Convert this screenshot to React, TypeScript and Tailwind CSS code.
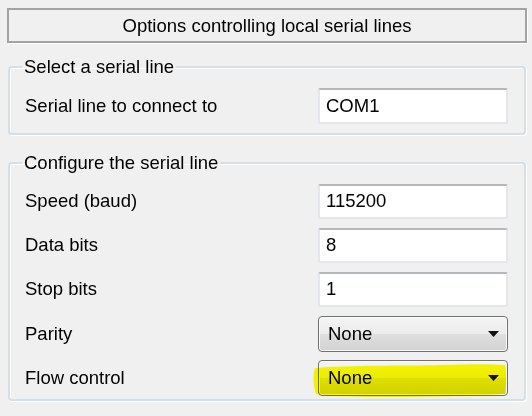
import React from 'react';

const font = { fontFamily: '"Liberation Sans", Arial, sans-serif' };

function TextBox({ value }: { value: string }) {
  return (
    <div className="w-[190px] h-[35.5px] bg-white border-2 border-[#e3e7ec] border-t-[#b4b7bd] rounded-[2px] flex items-center pl-[6px] text-[18.5px] text-black">
      {value}
    </div>
  );
}

function Combo({ value, highlight }: { value: string; highlight?: boolean }) {
  return (
    <div className="relative w-[190px] h-[36px]">
      <div className="w-full h-full rounded-[4px] border-[1.5px] border-[#707070] bg-[linear-gradient(to_bottom,#f4f4f4_0%,#ececec_50%,#dfdfdf_50%,#d2d2d2_100%)] shadow-[inset_0_0_0_1px_#fafafa] flex items-center justify-between pl-[9px] pr-[8px] text-[18.5px] text-black">
        <span>{value}</span>
        <svg width="11" height="6" viewBox="0 0 11 6">
          <path d="M0 0 H11 L5.5 6 Z" fill="#111" />
        </svg>
      </div>
      {highlight && (
        <svg
          className="absolute left-[-6px] top-[2px] mix-blend-multiply pointer-events-none"
          width="196"
          height="36"
          viewBox="0 0 196 36"
        >
          <path
            d="M3 6 C40 3 90 4 130 3 C160 2 180 2 193 3 C195 12 194 24 193 32 C160 34 120 35 70 35 C40 35 15 34 4 32 C1 22 1 12 3 6 Z"
            fill="#ffff00"
          />
        </svg>
      )}
    </div>
  );
}

function Row({ label, children }: { label: string; children: React.ReactNode }) {
  return (
    <div className="flex items-center justify-between">
      <span className="text-[18.5px] text-black">{label}</span>
      {children}
    </div>
  );
}

export default function App() {
  return (
    <div className="w-[532px] h-[416px] bg-[#f0f0f0] pt-[8px] pl-[7px] pr-[5px]" style={font}>
      <div className="h-[35px] border-2 border-[#a3a3a3] shadow-[1px_1px_0_#ffffff] flex items-center justify-center text-[18.5px] text-black">
        Options controlling local serial lines
      </div>

      <fieldset className="mt-[13px] ml-[1px] mr-[1px] border-2 border-[#d5dfe5] rounded-[4px] shadow-[inset_1px_1px_0_#ffffff,1px_1px_0_#ffffff] p-0">
        <legend className="ml-[12px] px-[2px] text-[18.5px] text-black leading-[22px]">Select a serial line</legend>
        <div className="mt-[10px] pl-[15px] pr-[16px] pb-[9px]">
          <Row label="Serial line to connect to">
            <TextBox value="COM1" />
          </Row>
        </div>
      </fieldset>

      <fieldset className="mt-[17px] ml-[1px] mr-[1px] border-2 border-[#d5dfe5] rounded-[4px] shadow-[inset_1px_1px_0_#ffffff,1px_1px_0_#ffffff] p-0">
        <legend className="ml-[12px] px-[2px] text-[18.5px] text-black leading-[22px]">Configure the serial line</legend>
        <div className="mt-[10px] pl-[15px] pr-[16px] pb-[3px] flex flex-col gap-[8.5px]">
          <Row label="Speed (baud)">
            <TextBox value="115200" />
          </Row>
          <Row label="Data bits">
            <TextBox value="8" />
          </Row>
          <Row label="Stop bits">
            <TextBox value="1" />
          </Row>
          <Row label="Parity">
            <Combo value="None" />
          </Row>
          <Row label="Flow control">
            <Combo value="None" highlight />
          </Row>
        </div>
      </fieldset>
    </div>
  );
}
